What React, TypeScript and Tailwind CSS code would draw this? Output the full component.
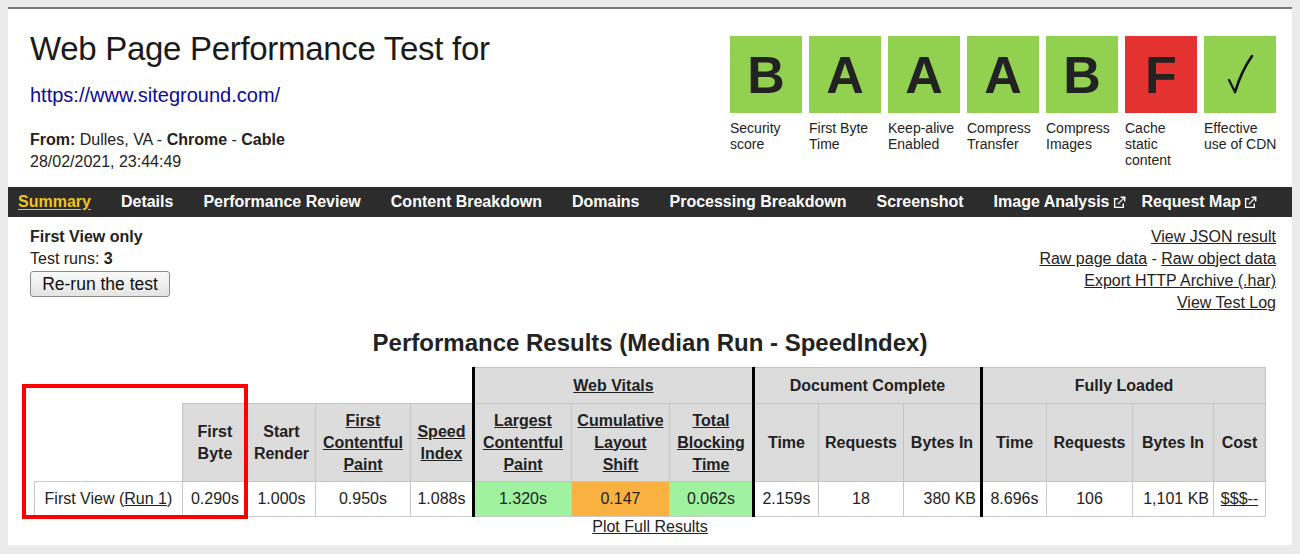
import React from "react";

type Grade = { mark: string; label: string[]; bad?: boolean };

const grades: Grade[] = [
  { mark: "B", label: ["Security", "score"] },
  { mark: "A", label: ["First Byte", "Time"] },
  { mark: "A", label: ["Keep-alive", "Enabled"] },
  { mark: "A", label: ["Compress", "Transfer"] },
  { mark: "B", label: ["Compress", "Images"] },
  { mark: "F", label: ["Cache", "static", "content"], bad: true },
  { mark: "check", label: ["Effective", "use of CDN"] },
];

const navItems = [
  { label: "Summary", active: true },
  { label: "Details" },
  { label: "Performance Review" },
  { label: "Content Breakdown" },
  { label: "Domains" },
  { label: "Processing Breakdown" },
  { label: "Screenshot" },
  { label: "Image Analysis", external: true },
  { label: "Request Map", external: true },
];

const colWidths = [148, 65, 68, 95, 63, 98, 98, 84, 65, 85, 78, 65, 86, 81, 52];

function ExternalIcon() {
  return (
    <svg viewBox="0 0 12 12" className="ml-[3px] h-[13px] w-[13px]" fill="none" stroke="currentColor" strokeWidth="1.3">
      <path d="M5 2.5H1.5v8h8V7" />
      <path d="M4.5 7.5L10.5 1.5" />
      <path d="M7 1.2h3.8V5" />
    </svg>
  );
}

function CheckMark() {
  return (
    <svg viewBox="0 0 30 44" className="h-[44px] w-[30px]" fill="none" stroke="#111" strokeLinecap="round" strokeLinejoin="round">
      <path d="M4 27 L10 39" strokeWidth="2.2" />
      <path d="M10 39 C 14 26, 20 13, 27 3" strokeWidth="2.6" />
    </svg>
  );
}

function GradeBox({ grade }: { grade: Grade }) {
  return (
    <div className="flex w-[72px] flex-col">
      <div
        className={
          "flex h-[77px] w-[72px] items-center justify-center " +
          (grade.bad ? "bg-[#e3322f]" : "bg-[#92d050]")
        }
      >
        {grade.mark === "check" ? (
          <CheckMark />
        ) : (
          <span className="text-[52px] font-bold leading-none text-[#222]">{grade.mark}</span>
        )}
      </div>
      <div className="mt-[7px] whitespace-nowrap text-[14px] leading-[16px] text-[#222]">
        {grade.label.map((l) => (
          <div key={l}>{l}</div>
        ))}
      </div>
    </div>
  );
}

const th = "border border-[#c4c4c4] bg-[#dcdcdc] px-[4px] text-center align-middle font-bold";
const td = "border border-[#c8c8c8] px-[4px] text-center";
const thick = "border-l-[3px] border-l-black";

export default function App() {
  return (
    <div className="relative h-[554px] w-[1300px] overflow-hidden bg-[#ebebeb] font-['Liberation_Sans',Arial,sans-serif] text-[#222]">
      <div className="ml-[8px] mt-[7px] h-[538px] w-[1284px] border-t-2 border-[#7a7a7a] bg-white">
        {/* header */}
        <div className="flex h-[178px] justify-between pl-[22px] pr-[16px]">
          <div>
            <h1 className="mt-[20px] text-[33px] font-normal leading-[40px] tracking-[-0.3px] text-[#1a1a1a]">
              Web Page Performance Test for
            </h1>
            <div className="mt-[14px] text-[20px] leading-[24px] text-[#0a0a9a]">https://www.siteground.com/</div>
            <div className="mt-[22px] text-[16px] leading-[22px]">
              <b>From:</b> Dulles, VA - <b>Chrome</b> - <b>Cable</b>
            </div>
            <div className="text-[16px] leading-[22px]">28/02/2021, 23:44:49</div>
          </div>
          <div className="mt-[27px] flex gap-[7px]">
            {grades.map((g, i) => (
              <GradeBox key={i} grade={g} />
            ))}
          </div>
        </div>

        {/* nav */}
        <nav className="flex h-[30px] items-center gap-[30px] bg-[#2c2c2c] pl-[10px] text-[16px] font-bold text-white">
          {navItems.map((n) => (
            <span
              key={n.label}
              className={
                "flex items-center " +
                (n.active ? "text-[#f0c41b] underline underline-offset-2" : "") +
                (n.label === "Request Map" ? " -ml-[14px]" : "")
              }
            >
              {n.label}
              {n.external ? <ExternalIcon /> : null}
            </span>
          ))}
        </nav>

        {/* info */}
        <div className="flex justify-between pl-[22px] pr-[16px] pt-[9px] text-[16px] leading-[22px]">
          <div>
            <div className="font-bold">First View only</div>
            <div>
              Test runs: <b>3</b>
            </div>
            <button
              type="button"
              className="mt-[1px] flex h-[26px] w-[140px] items-center justify-center rounded-[3px] border border-[#8a8a8a] bg-gradient-to-b from-[#fafafa] to-[#e4e4e4] text-[17.5px] text-[#111]"
            >
              Re-run the test
            </button>
          </div>
          <div className="text-right">
            <div><a className="underline">View JSON result</a></div>
            <div>
              <a className="underline">Raw page data</a> - <a className="underline">Raw object data</a>
            </div>
            <div><a className="underline">Export HTTP Archive (.har)</a></div>
            <div><a className="underline">View Test Log</a></div>
          </div>
        </div>

        <h2 className="mt-[15px] text-center text-[24px] font-bold leading-[28px]">
          Performance Results (Median Run - SpeedIndex)
        </h2>

        <table className="mx-auto mt-[10px] w-[1231px] table-fixed border-collapse text-[16px] leading-[22px]">
          <colgroup>
            {colWidths.map((w, i) => (
              <col key={i} style={{ width: w }} />
            ))}
          </colgroup>
          <thead>
            <tr className="h-[36px]">
              <th colSpan={5} className="bg-white" />
              <th colSpan={3} className={th + " " + thick}>
                <span className="underline">Web Vitals</span>
              </th>
              <th colSpan={3} className={th + " " + thick}>Document Complete</th>
              <th colSpan={4} className={th + " " + thick}>Fully Loaded</th>
            </tr>
            <tr className="h-[78px]">
              <th className="border-0 bg-white" />
              <th className={th}>First<br />Byte</th>
              <th className={th}>Start<br />Render</th>
              <th className={th}><span className="underline">First<br />Contentful<br />Paint</span></th>
              <th className={th}><span className="underline">Speed<br />Index</span></th>
              <th className={th + " " + thick}><span className="underline">Largest<br />Contentful<br />Paint</span></th>
              <th className={th}><span className="underline">Cumulative<br />Layout<br />Shift</span></th>
              <th className={th}><span className="underline">Total<br />Blocking<br />Time</span></th>
              <th className={th + " " + thick}>Time</th>
              <th className={th}>Requests</th>
              <th className={th}>Bytes In</th>
              <th className={th + " " + thick}>Time</th>
              <th className={th}>Requests</th>
              <th className={th}>Bytes In</th>
              <th className={th}>Cost</th>
            </tr>
          </thead>
          <tbody>
            <tr className="h-[35px]">
              <td className={td + " bg-white"}>
                First View (<span className="underline">Run 1</span>)
              </td>
              <td className={td + " bg-white"}>0.290s</td>
              <td className={td + " bg-white"}>1.000s</td>
              <td className={td + " bg-white"}>0.950s</td>
              <td className={td + " bg-white"}>1.088s</td>
              <td className={td + " " + thick + " bg-[#a0f2a0]"}>1.320s</td>
              <td className={td + " bg-[#f9b240]"}>0.147</td>
              <td className={td + " bg-[#a0f2a0]"}>0.062s</td>
              <td className={td + " " + thick + " bg-white"}>2.159s</td>
              <td className={td + " bg-white"}>18</td>
              <td className={td + " bg-white text-right"}>380 KB</td>
              <td className={td + " " + thick + " bg-white"}>8.696s</td>
              <td className={td + " bg-white"}>106</td>
              <td className={td + " bg-white text-right"}>1,101 KB</td>
              <td className={td + " bg-white"}><span className="underline">$$$--</span></td>
            </tr>
          </tbody>
        </table>
        <div className="text-center text-[16px] leading-[20px]">
          <a className="underline">Plot Full Results</a>
        </div>
      </div>

      <div className="absolute left-[22px] top-[384px] h-[135px] w-[226px] border-[4px] border-[#f00]" />
    </div>
  );
}
